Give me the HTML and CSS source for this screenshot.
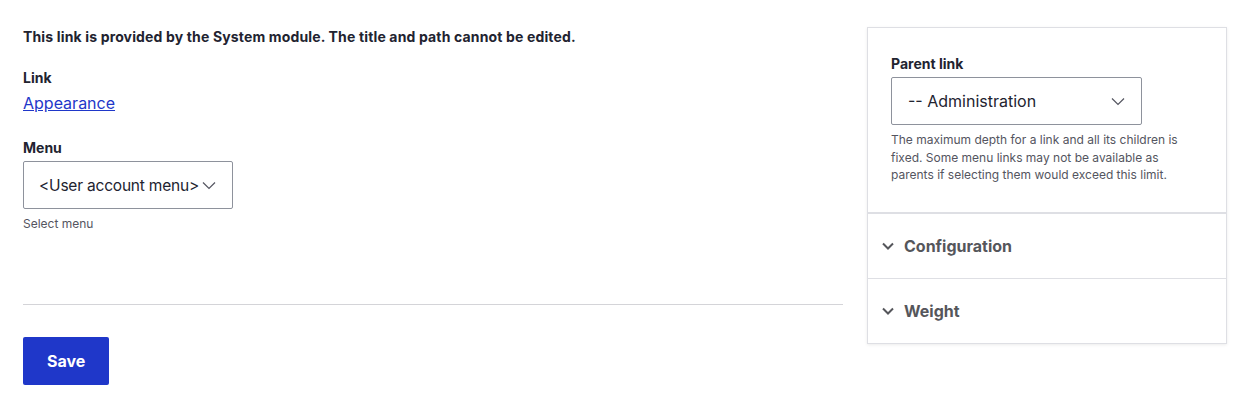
FILE: index.html
```html
<!DOCTYPE html>
<html lang="en">

<head>
  <meta charset="UTF-8">
  <title>Edit menu link</title>
  <meta name="viewport" content="width=device-width, initial-scale=1.0">
  <link rel="stylesheet" href="styles.css">
</head>

<body>

  <form class="layout">
    <div class="main">
      <p class="notice">This link is provided by the System module. The title and path cannot be edited.</p>

      <div class="form-item">
        <div class="label">Link</div>
        <a class="link" href="#">Appearance</a>
      </div>

      <div class="form-item">
        <label class="label" for="menu">Menu</label>
        <div class="select select-menu">
          <span>&lt;User account menu&gt;</span>
          <svg class="select-arrow" width="14" height="9" viewBox="0 0 14 9"><path d="M1 1.5l6 6 6-6" fill="none" stroke="#545560" stroke-width="1.2"/></svg>
        </div>
        <div class="description">Select menu</div>
      </div>

      <div class="actions">
        <button class="btn-primary" type="button">Save</button>
      </div>
    </div>

    <aside class="sidebar">
      <div class="sidebar-section">
        <label class="label" for="parent">Parent link</label>
        <div class="select select-parent">
          <span>-- Administration</span>
          <svg class="select-arrow" width="14" height="9" viewBox="0 0 14 9"><path d="M1 1.5l6 6 6-6" fill="none" stroke="#545560" stroke-width="1.2"/></svg>
        </div>
        <div class="description">The maximum depth for a link and all its children is fixed. Some menu links may not be available as parents if selecting them would exceed this limit.</div>
      </div>

      <div class="details">
        <svg class="details-icon" width="12" height="8" viewBox="0 0 12 8"><path d="M1 1.5l5 5 5-5" fill="none" stroke="#55565b" stroke-width="2"/></svg>
        <span>Configuration</span>
      </div>

      <div class="details">
        <svg class="details-icon" width="12" height="8" viewBox="0 0 12 8"><path d="M1 1.5l5 5 5-5" fill="none" stroke="#55565b" stroke-width="2"/></svg>
        <span>Weight</span>
      </div>
    </aside>
  </form>

</body>

</html>
```

FILE: styles.css
```css
:root {
  --blue: #1f37c9;
  --text: #222330;
  --muted: #545560;
  --border: #dedfe4;
}

* {
  box-sizing: border-box;
  margin: 0;
  padding: 0;
}

body {
  font-family: Inter, "Liberation Sans", sans-serif;
  color: var(--text);
  background: #fff;
}

.layout {
  display: flex;
  gap: 24px;
  padding: 27px 20px 0 23px;
}

.main {
  flex: 1;
}

.notice {
  font-size: 14px;
  font-weight: 700;
  line-height: 18px;
  letter-spacing: 0.15px;
  padding-top: 1px;
  margin-bottom: 23px;
}

.form-item {
  margin-bottom: 24px;
}

.label {
  display: block;
  font-size: 14px;
  font-weight: 700;
  line-height: 18px;
  margin-bottom: 4px;
}

.link {
  font-size: 16px;
  line-height: 24px;
  color: var(--blue);
}

.select {
  display: flex;
  align-items: center;
  justify-content: space-between;
  height: 48px;
  border: 1px solid #8e929c;
  border-radius: 2px;
  font-size: 16px;
  color: var(--text);
  white-space: nowrap;
}

.select-menu {
  width: 210px;
  padding: 0 16px 0 15px;
  font-size: 15.5px;
  letter-spacing: -0.2px;
}

.select-parent {
  width: 251px;
  padding: 0 16px 0 16px;
}

.description {
  font-size: 12px;
  line-height: 17.5px;
  color: var(--muted);
  margin-top: 6px;
}

.actions {
  border-top: 1px solid #d4d4d8;
  margin-top: 71px;
  padding-top: 32px;
}

.btn-primary {
  height: 48px;
  padding: 0 24px;
  border: none;
  border-radius: 2px;
  background: var(--blue);
  color: #fff;
  font-family: inherit;
  font-size: 16px;
  font-weight: 700;
}

.sidebar {
  width: 360px;
  flex-shrink: 0;
  align-self: flex-start;
  border: 1px solid var(--border);
  box-shadow: 0 1px 3px rgba(0, 0, 0, 0.08);
}

.sidebar-section {
  padding: 27px 23px 28px;
  border-bottom: 2px solid var(--border);
}

.sidebar-section .label {
  margin-bottom: 4px;
}

.sidebar-section .description {
  margin-top: 6px;
  width: 310px;
}

.details {
  display: flex;
  align-items: center;
  gap: 10px;
  height: 64px;
  padding-left: 14px;
  font-size: 16px;
  font-weight: 700;
  color: #55565b;
}

.details + .details {
  border-top: 1px solid var(--border);
  height: 65px;
}
```
